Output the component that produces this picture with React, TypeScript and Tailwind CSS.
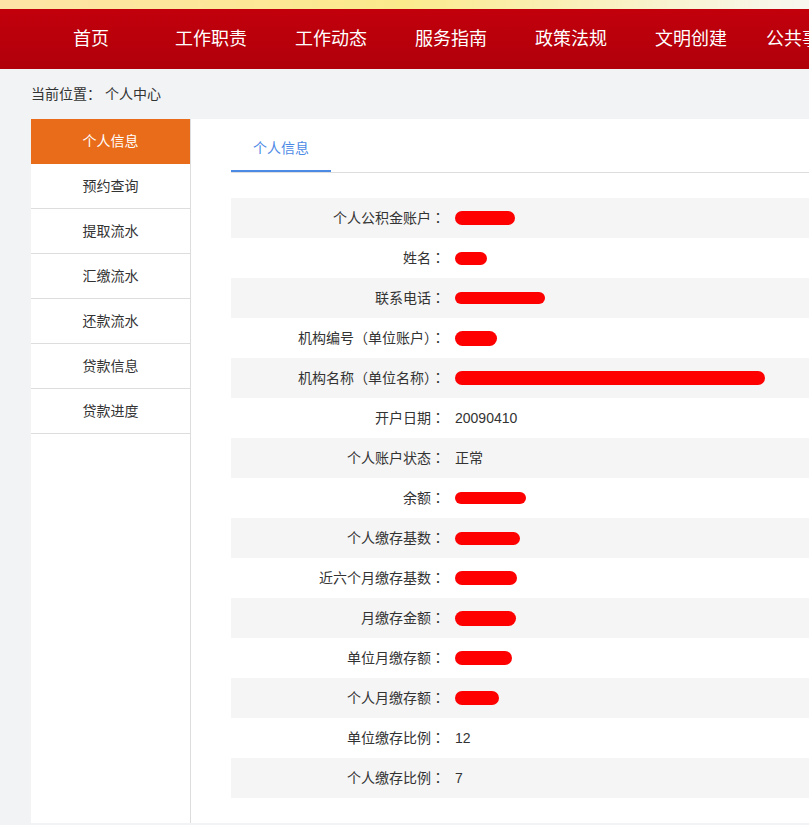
import React from 'react';

interface InfoRow {
  label: string;
  value?: string;
  // redacted values are drawn as a red scribble
  mask?: string;
}

const navItems = ['首页', '工作职责', '工作动态', '服务指南', '政策法规', '文明创建', '公共事务栏'];

const menuItems = ['个人信息', '预约查询', '提取流水', '汇缴流水', '还款流水', '贷款信息', '贷款进度'];

const rows: InfoRow[] = [
  { label: '个人公积金账户', mask: 'w-[60px] h-[14px]' },
  { label: '姓名', mask: 'w-[32px] h-[13px]' },
  { label: '联系电话', mask: 'w-[90px] h-[12px]' },
  { label: '机构编号（单位账户）', mask: 'w-[42px] h-[15px]' },
  { label: '机构名称（单位名称）', mask: 'w-[310px] h-[14px]' },
  { label: '开户日期', value: '20090410' },
  { label: '个人账户状态', value: '正常' },
  { label: '余额', mask: 'w-[71px] h-[12px]' },
  { label: '个人缴存基数', mask: 'w-[65px] h-[13px]' },
  { label: '近六个月缴存基数', mask: 'w-[62px] h-[14px]' },
  { label: '月缴存金额', mask: 'w-[61px] h-[15px]' },
  { label: '单位月缴存额', mask: 'w-[57px] h-[14px]' },
  { label: '个人月缴存额', mask: 'w-[44px] h-[14px]' },
  { label: '单位缴存比例', value: '12' },
  { label: '个人缴存比例', value: '7' },
];

const App = () => {
  return (
    <div className="w-[809px] h-[825px] overflow-hidden bg-[#f2f3f5] font-['Liberation_Sans','Noto_Sans_CJK_SC',sans-serif] text-[#333]">
      <div className="h-[9px] bg-gradient-to-r from-[#fde3a6] via-[#fbea8c] to-[#f7f7f0]" />

      <div className="h-[60px] bg-gradient-to-b from-[#c2000c] to-[#b0000a]">
        <div className="flex pl-[31px] w-[1200px] h-full items-center">
          {navItems.map((item) => (
            <div key={item} className="w-[120px] shrink-0 text-center text-[18px] text-white leading-[24px] whitespace-nowrap">
              {item}
            </div>
          ))}
        </div>
      </div>

      <div className="pl-[31px] h-[50px] flex items-center text-[14px]">当前位置： 个人中心</div>

      <div className="flex w-[1200px] ml-[31px] h-[704px]">
        <div className="w-[160px] shrink-0 bg-white border-r border-[#dddddd]">
          {menuItems.map((item, i) => (
            <div
              key={item}
              className={`h-[45px] flex items-center justify-center text-[14px] border-b ${
                i === 0 ? 'bg-[#e96c1b] text-white border-[#e96c1b]' : 'border-[#dddddd]'
              }`}
            >
              {item}
            </div>
          ))}
        </div>

        <div className="flex-1 bg-white pl-[40px]">
          <div className="flex border-b border-[#dddddd]">
            <div className="w-[100px] text-center text-[14px] leading-[20px] pt-[19px] pb-[12px] text-[#4d8ae6] border-b-2 border-[#4d8ae6]">
              个人信息
            </div>
          </div>

          <div className="mt-[25px]">
            {rows.map((row, i) => (
              <div key={row.label} className={`flex h-[40px] items-center text-[14px] ${i % 2 === 0 ? 'bg-[#f5f5f5]' : ''}`}>
                <div className="w-[214px] text-right">
                  {row.label}
                  <span className="font-['Noto_Sans_CJK_TC',sans-serif]">：</span>
                </div>
                <div className="pl-[10px]">
                  {row.mask ? (
                    <span className={`block rounded-full bg-[#ff0000] ${row.mask}`} />
                  ) : (
                    row.value
                  )}
                </div>
              </div>
            ))}
          </div>
        </div>
      </div>
    </div>
  );
};

export default App;
